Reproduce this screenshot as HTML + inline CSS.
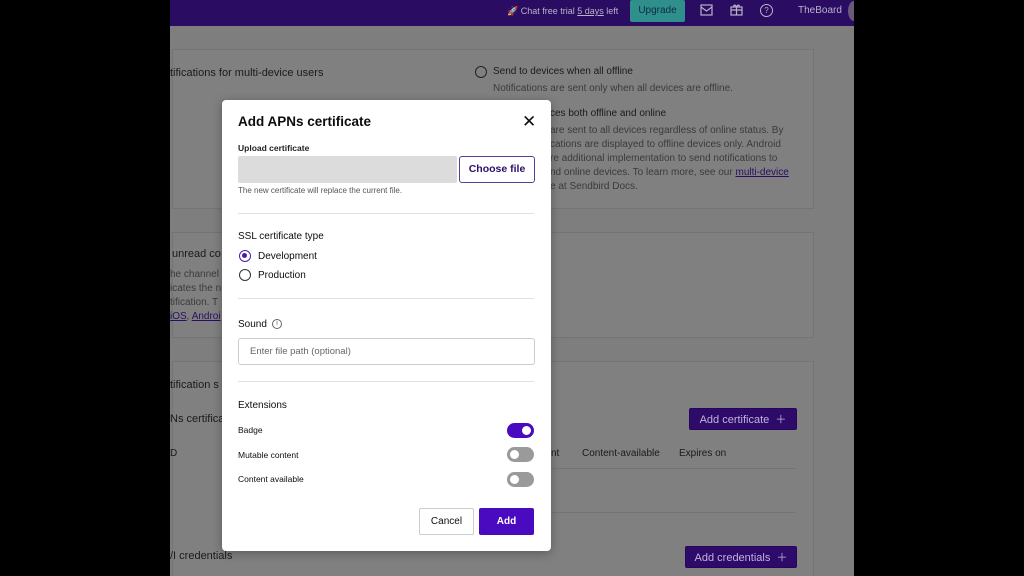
<!DOCTYPE html>
<html><head><meta charset="utf-8"><style>
*{margin:0;padding:0;box-sizing:border-box}
body{width:1024px;height:576px;background:#000;position:relative;overflow:hidden;font-family:"Liberation Sans",sans-serif}
.a{position:absolute;white-space:nowrap}
#app{position:absolute;left:170px;top:0;width:684px;height:576px;background:#7e7e7e;overflow:hidden}
.card{position:absolute;left:2px;width:642px;border:1px solid #747474;background:#808080}
.bg{color:#1a1a1a;font-size:11px}
.bgm{color:#3a3a3a;font-size:10px}
.pbtn{position:absolute;background:#2e0a6a;border:1px solid #240855;color:#bfb6d6;font-size:11px;border-radius:2px;display:flex;align-items:center;justify-content:center}
#modal{position:absolute;left:222px;top:100px;width:329px;height:451px;background:#fff;border-radius:4px;box-shadow:0 2px 10px rgba(0,0,0,.3)}
.m{position:absolute;white-space:nowrap;color:#0d0d0d}
.hr{position:absolute;left:16px;width:296px;height:1px;background:#e0e0e0}
.tog{position:absolute;left:285px;width:27px;height:15px;border-radius:8px}
.tog i{position:absolute;top:3px;width:9px;height:9px;border-radius:50%;background:#fff}
.rad{position:absolute;left:17px;width:12px;height:12px;border-radius:50%;border:1.3px solid #333}
</style></head><body>
<div id="app">
 <div class="a" style="left:0;top:0;width:684px;height:26px;background:#2a0c63"></div>
 <div class="a" style="left:337px;top:6px;font-size:9px;color:#b9b3c8">🚀 Chat free trial <u>5 days</u> left</div>
 <div class="a" style="left:460px;top:0;width:55px;height:22px;background:#2f8f8a;border-radius:2px;color:#0f2a48;font-size:10px;line-height:22px;text-align:center">Upgrade</div>
 <svg class="a" style="left:530px;top:4px" width="13" height="12" viewBox="0 0 13 12" fill="none" stroke="#b9b3c8" stroke-width="1.2"><rect x="1" y="1" width="11" height="10"/><path d="M1 3l5.5 4L12 3"/></svg>
 <svg class="a" style="left:560px;top:4px" width="13" height="12" viewBox="0 0 13 12" fill="none" stroke="#b9b3c8" stroke-width="1.2"><rect x="1" y="3" width="11" height="8"/><path d="M1 6h11M6.5 3v8M6.5 3C5 0 3 1 4 3M6.5 3C8 0 10 1 9 3"/></svg>
 <div class="a" style="left:590px;top:4px;width:13px;height:13px;border:1.3px solid #b9b3c8;border-radius:50%;font-size:8px;color:#b9b3c8;text-align:center;line-height:11px">?</div>
 <div class="a" style="left:628px;top:5px;font-size:10px;color:#b9b3c8">TheBoard</div>
 <div class="a" style="left:678px;top:1px;width:12px;height:20px;border-radius:50%;background:#6a5a7a"></div>

 <div class="card" style="top:49px;height:160px"></div>
 <div class="a bg" style="left:0;top:67px">tifications for multi-device users</div>
 <div class="a" style="left:305px;top:66px;width:12px;height:12px;border-radius:50%;border:1.3px solid #222"></div>
 <div class="a bg" style="left:323px;top:66px;font-size:10px">Send to devices when all offline</div>
 <div class="a bgm" style="left:323px;top:83px">Notifications are sent only when all devices are offline.</div>
 <div class="a bg" style="left:380px;top:108px;font-size:10px">ces both offline and online</div>
 <div class="a bgm" style="left:380px;top:124px;line-height:14px">are sent to all devices regardless of online status. By<br>cations are displayed to offline devices only. Android<br>re additional implementation to send notifications to<br>nd online devices. To learn more, see our <u style="color:#2a0c63">multi-device</u><br>e at Sendbird Docs.</div>

 <div class="card" style="top:232px;height:106px"></div>
 <div class="a bg" style="left:2px;top:248px">unread co</div>
 <div class="a bgm" style="left:0;top:268px;line-height:14px">he channel u<br>icates the n<br>tification. T<br><u style="color:#2a0c63">iOS</u>, <u style="color:#2a0c63">Androi</u></div>

 <div class="card" style="top:361px;height:230px"></div>
 <div class="a bg" style="left:0;top:379px">tification s</div>
 <div class="a bg" style="left:0;top:413px">Ns certifica</div>
 <div class="pbtn" style="left:519px;top:408px;width:108px;height:22px">Add certificate&nbsp;&nbsp;＋</div>
 <div class="a bg" style="left:0;top:448px;font-size:10px">D</div>
 <div class="a bg" style="left:381px;top:448px;font-size:10px">nt</div>
 <div class="a bg" style="left:412px;top:448px;font-size:10px">Content-available</div>
 <div class="a bg" style="left:509px;top:448px;font-size:10px">Expires on</div>
 <div class="a" style="left:382px;top:468px;width:244px;height:1px;background:#747474"></div>
 <div class="a" style="left:382px;top:512px;width:244px;height:1px;background:#747474"></div>
 <div class="a bg" style="left:0;top:550px">/I credentials</div>
 <div class="pbtn" style="left:515px;top:546px;width:112px;height:22px">Add credentials&nbsp;&nbsp;＋</div>
</div>

<div id="modal">
 <div class="m" style="left:16px;top:14px;font-size:13.5px;font-weight:bold">Add APNs certificate</div>
 <div class="m" style="left:300px;top:12px;font-size:17px">✕</div>
 <div class="m" style="left:16px;top:43px;font-size:8.5px;font-weight:bold;color:#222">Upload certificate</div>
 <div class="m" style="left:16px;top:56px;width:219px;height:27px;background:#dcdcdc;border-radius:2px"></div>
 <div class="m" style="left:237px;top:56px;width:76px;height:27px;border:1px solid #5a3d96;border-radius:3px;color:#2a0e6e;font-size:10.5px;font-weight:bold;text-align:center;line-height:25px">Choose file</div>
 <div class="m" style="left:16px;top:86px;font-size:8px;color:#555">The new certificate will replace the current file.</div>
 <div class="hr" style="top:113px"></div>
 <div class="m" style="left:16px;top:131px;font-size:10px">SSL certificate type</div>
 <div class="rad" style="top:150px;border-color:#4a1aa8"><i style="position:absolute;left:2.2px;top:2.2px;width:5px;height:5px;border-radius:50%;background:#4a1aa8"></i></div>
 <div class="m" style="left:36px;top:151px;font-size:10px">Development</div>
 <div class="rad" style="top:169px"></div>
 <div class="m" style="left:36px;top:170px;font-size:10px">Production</div>
 <div class="hr" style="top:198px"></div>
 <div class="m" style="left:16px;top:219px;font-size:10px">Sound</div>
 <div class="m" style="left:50px;top:219px;width:10px;height:10px;border:1px solid #666;border-radius:50%;font-size:7px;text-align:center;line-height:8px;color:#666">i</div>
 <div class="m" style="left:16px;top:238px;width:297px;height:27px;border:1px solid #ccc;border-radius:3px;font-size:9.5px;color:#666;line-height:25px;padding-left:11px">Enter file path (optional)</div>
 <div class="hr" style="top:281px"></div>
 <div class="m" style="left:16px;top:300px;font-size:10px">Extensions</div>
 <div class="m" style="left:16px;top:325px;font-size:8.5px">Badge</div>
 <div class="tog" style="top:323px;background:#4a0bc0"><i style="left:15px"></i></div>
 <div class="m" style="left:16px;top:350px;font-size:8.5px">Mutable content</div>
 <div class="tog" style="top:347px;background:#9a9a9a"><i style="left:3px"></i></div>
 <div class="m" style="left:16px;top:374px;font-size:8.5px">Content available</div>
 <div class="tog" style="top:372px;background:#9a9a9a"><i style="left:3px"></i></div>
 <div class="m" style="left:197px;top:408px;width:55px;height:27px;border:1px solid #ccc;border-radius:2px;font-size:10px;text-align:center;line-height:25px">Cancel</div>
 <div class="m" style="left:257px;top:408px;width:55px;height:27px;background:#4a0bc0;border-radius:2px;font-size:10px;font-weight:bold;color:#fff;text-align:center;line-height:27px">Add</div>
</div>
</body></html>
